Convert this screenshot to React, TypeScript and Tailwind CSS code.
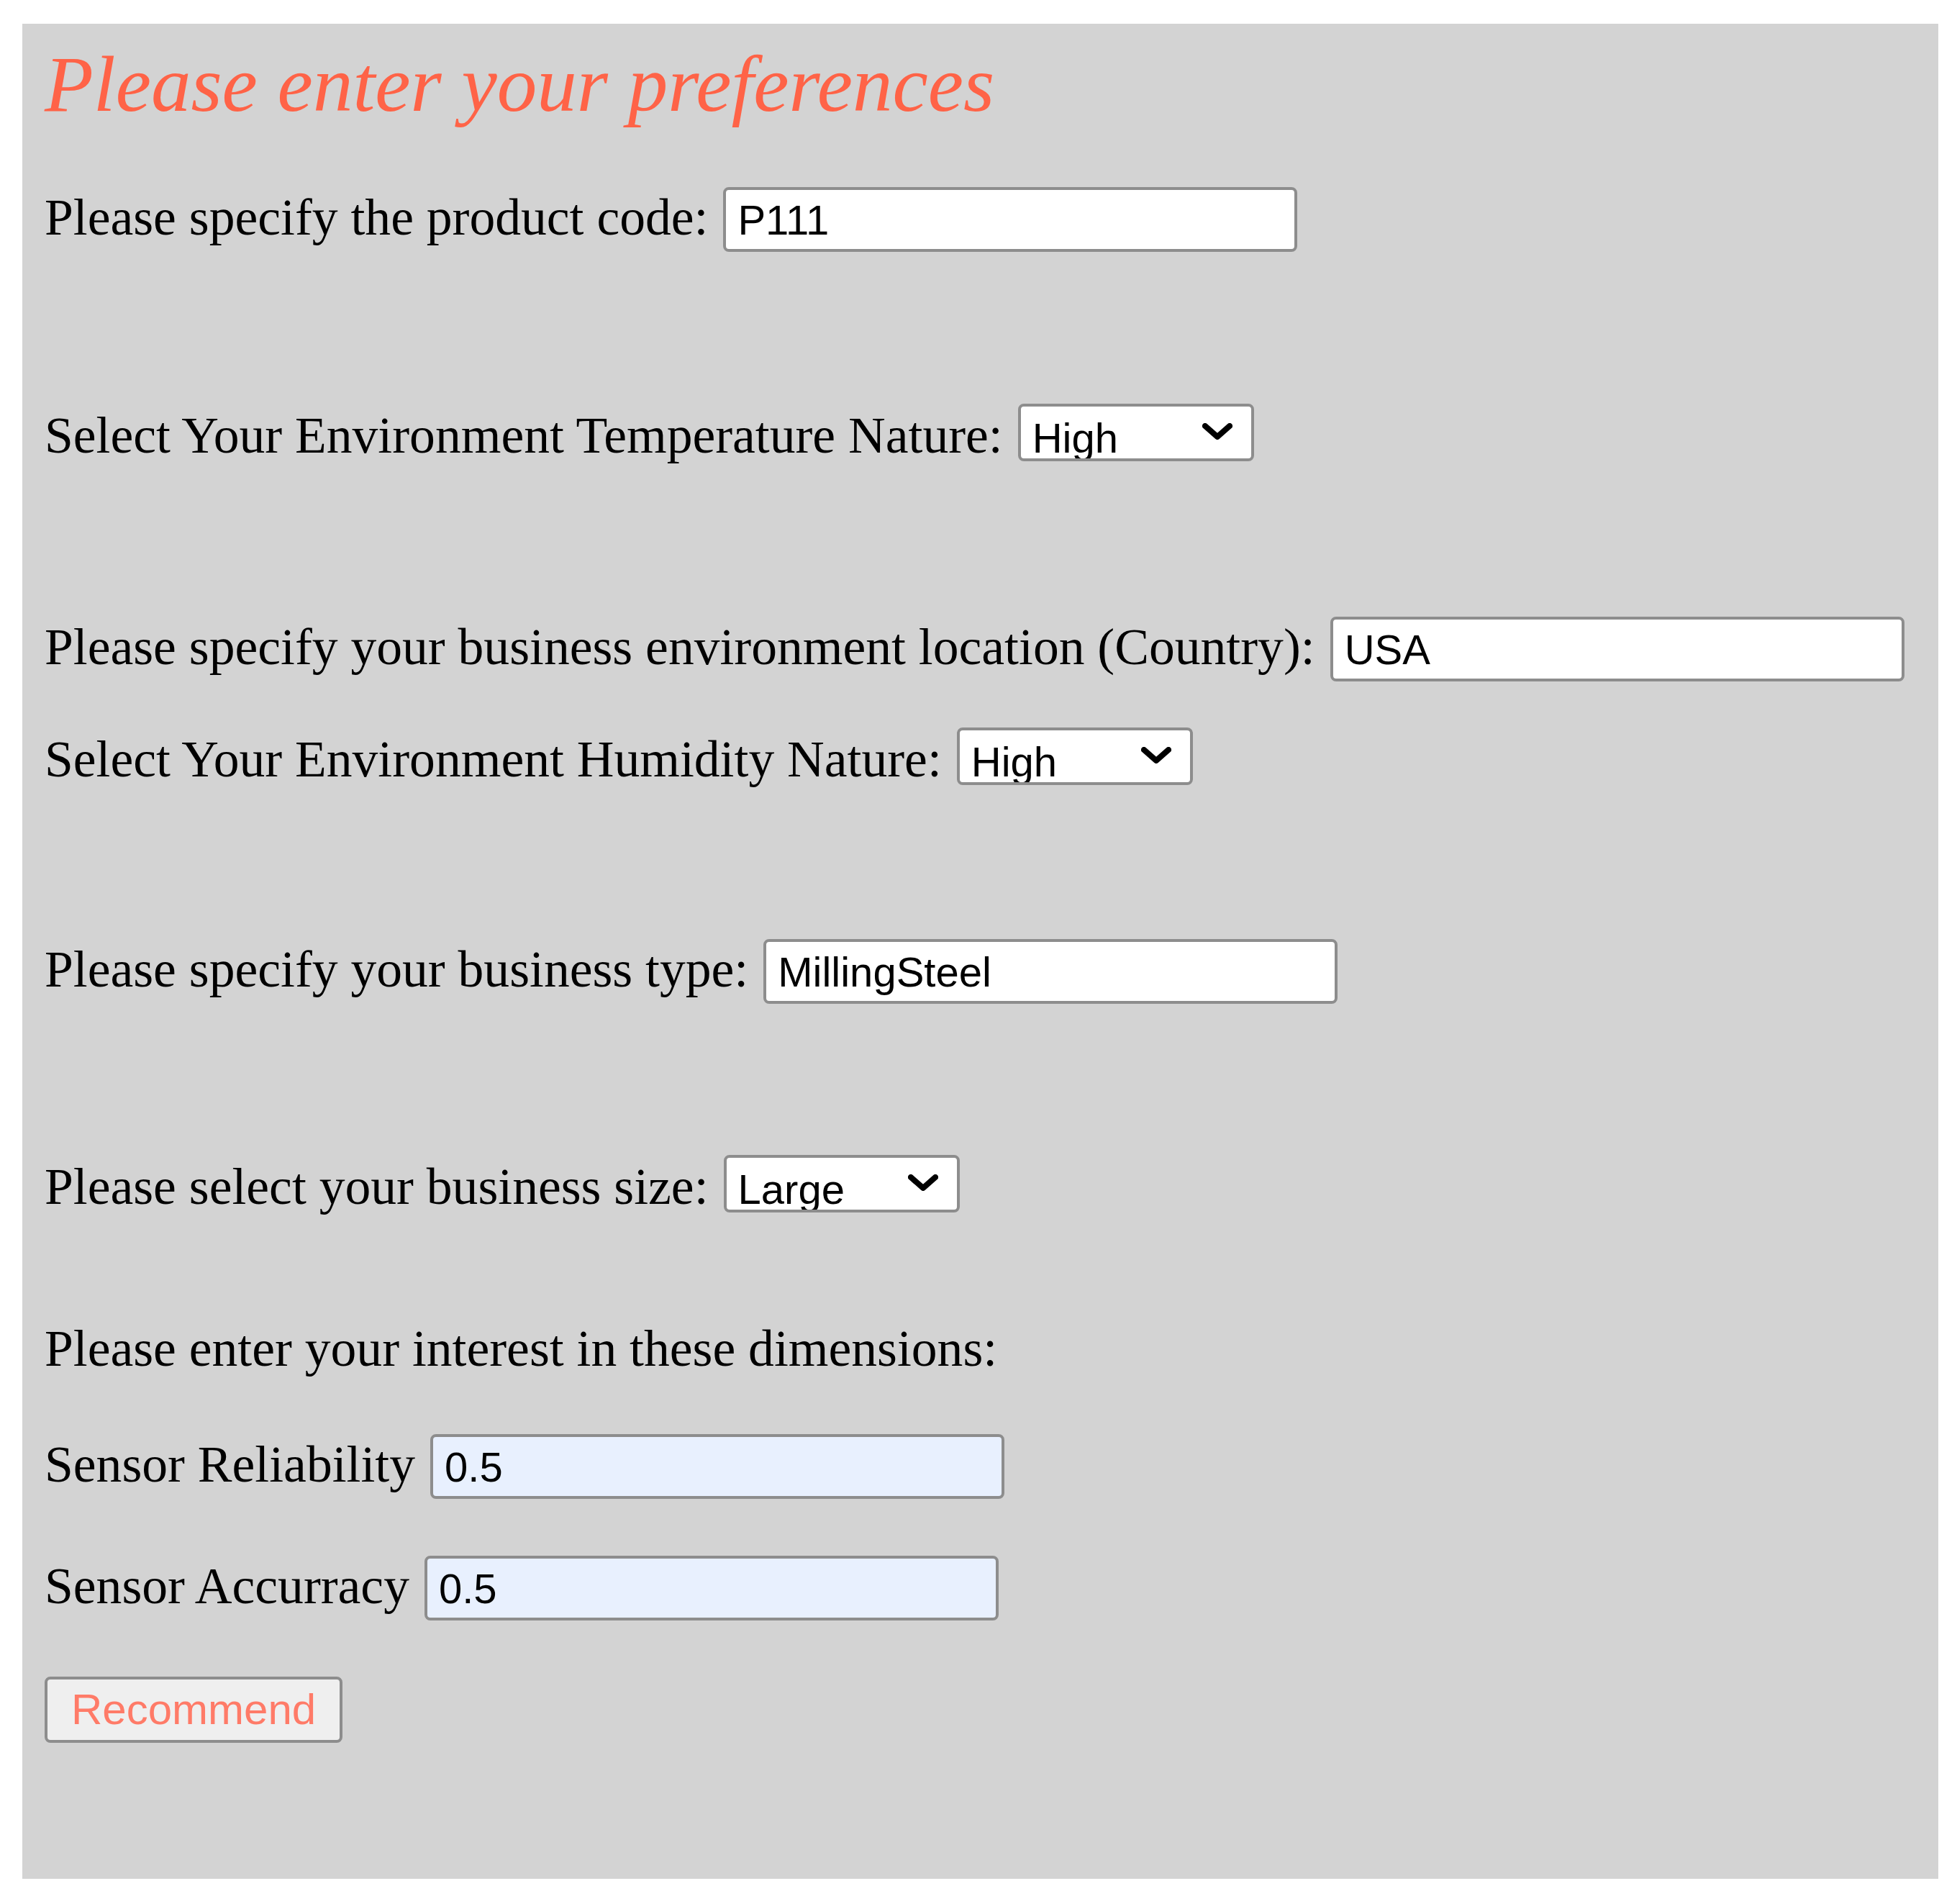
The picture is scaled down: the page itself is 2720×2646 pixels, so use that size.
import type { ReactNode } from "react";

const serif = "font-['Liberation_Serif','Times_New_Roman',serif]";
const sans = "font-['Liberation_Sans',Arial,sans-serif]";

const Label = ({ children }: { children: ReactNode }) => (
    <span className={`${serif} whitespace-nowrap text-[71.6px] leading-[80px] text-black`}>
        {children}
    </span>
);

const TextBox = ({ value, tinted }: { value: string; tinted?: boolean }) => (
    <input
        type="text"
        defaultValue={value}
        className={`${sans} h-[90px] w-[798px] rounded-[8px] border-[4px] border-[#8d8d8d] px-[16px] text-[58px] text-black outline-none ${
            tinted ? "bg-[#e8f0fe]" : "bg-white"
        }`}
    />
);

const Dropdown = ({ value, options }: { value: string; options: string[] }) => (
    <span className="relative inline-flex">
        <select
            defaultValue={value}
            className={`${sans} h-[80px] w-[328px] appearance-none rounded-[8px] border-[4px] border-[#8d8d8d] bg-white pl-[16px] text-[58px] text-black outline-none`}
        >
            {options.map((o) => (
                <option key={o}>{o}</option>
            ))}
        </select>
        <svg
            className="pointer-events-none absolute right-[30px] top-[27px]"
            width="42"
            height="23"
            viewBox="0 0 42 23"
            fill="none"
        >
            <path
                d="M4 4 L21 19 L38 4"
                stroke="#000"
                strokeWidth="8"
                strokeLinecap="round"
                strokeLinejoin="round"
            />
        </svg>
    </span>
);

const Row = ({ children, className }: { children: ReactNode; className: string }) => (
    <div className={`flex items-baseline gap-[21px] ${className}`}>{children}</div>
);

export default function App() {
    return (
        <div className="min-h-screen bg-white pl-[31px] pt-[33px]">
            <div className="flex h-[2578px] w-[2663px] flex-col items-start bg-[#d3d3d3] pl-[31px]">
                <h2 className={`${serif} mt-[28px] text-[111px] italic leading-none text-[#ff6347]`}>
                    Please enter your preferences
                </h2>

                <Row className="mt-[88px]">
                    <Label>Please specify the product code:</Label>
                    <TextBox value="P111" />
                </Row>

                <Row className="mt-[211px]">
                    <Label>Select Your Environment Temperature Nature:</Label>
                    <Dropdown value="High" options={["High", "Medium", "Low"]} />
                </Row>

                <Row className="mt-[212px]">
                    <Label>Please specify your business environment location (Country):</Label>
                    <TextBox value="USA" />
                </Row>

                <Row className="mt-[64px]">
                    <Label>Select Your Environment Humidity Nature:</Label>
                    <Dropdown value="High" options={["High", "Medium", "Low"]} />
                </Row>

                <Row className="mt-[210px]">
                    <Label>Please specify your business type:</Label>
                    <TextBox value="MillingSteel" />
                </Row>

                <Row className="mt-[210px]">
                    <Label>Please select your business size:</Label>
                    <Dropdown value="Large" options={["Small", "Medium", "Large"]} />
                </Row>

                <div className="mt-[145px]">
                    <Label>Please enter your interest in these dimensions:</Label>
                </div>

                <Row className="mt-[79px]">
                    <Label>Sensor Reliability</Label>
                    <TextBox value="0.5" tinted />
                </Row>

                <Row className="mt-[79px]">
                    <Label>Sensor Accurracy</Label>
                    <TextBox value="0.5" tinted />
                </Row>

                <button
                    type="button"
                    className={`${sans} mt-[78px] h-[92px] rounded-[8px] border-[4px] border-[#8d8d8d] bg-[#efefef] px-[33px] text-[60px] leading-none text-[#ff7b68]`}
                >
                    Recommend
                </button>
            </div>
        </div>
    );
}
